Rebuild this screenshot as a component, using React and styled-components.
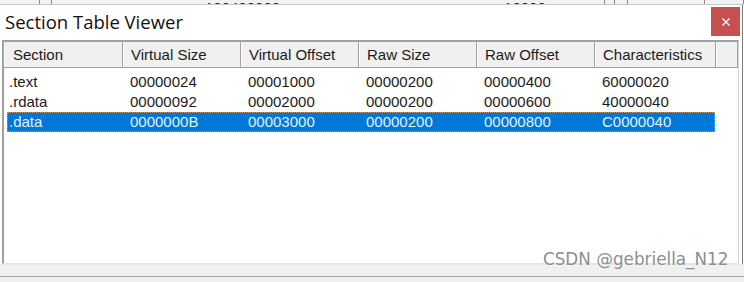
import React from "react";
import styled, { createGlobalStyle } from "styled-components";

const Global = createGlobalStyle`
  html, body { margin: 0; padding: 0; background: #ffffff; overflow: hidden; }
  #root { width: 744px; height: 282px; }
`;

const Page = styled.div`
  position: relative;
  width: 744px;
  height: 282px;
  display: flex;
  flex-direction: column;
  background: #ffffff;
  overflow: hidden;
`;

const Backdrop = styled.div`
  flex: none;
  height: 4px;
  display: flex;
  background: #f2f2f2;
  border-bottom: 1px solid #c9c9c9;
  overflow: hidden;
`;

const BackSeg = styled.div`
  flex: none;
  width: ${(p) => p.$w}px;
  border-right: 1px solid #8a8a8a;
  box-sizing: border-box;
  overflow: hidden;
  font-family: "Liberation Sans", Arial, sans-serif;
  font-size: 15px;
  line-height: 15px;
  color: #222;
  white-space: nowrap;
`;

const BackText = styled.span`
  display: inline-block;
  margin-top: -13px;
  margin-left: ${(p) => p.$x}px;
`;

const Window = styled.div`
  flex: 1;
  display: flex;
  flex-direction: column;
  border-right: 1px solid #7a7a7a;
  margin-right: 1px;
  background: #ffffff;
  min-height: 0;
`;

const TitleBar = styled.div`
  flex: none;
  height: 35px;
  display: flex;
  align-items: flex-start;
  justify-content: space-between;
  padding: 0 2px 0 5px;
`;

const Title = styled.div`
  margin-top: 5px;
  font-family: "Open Sans", "Noto Sans", sans-serif;
  font-size: 18.5px;
  line-height: 24px;
  color: #111;
`;

const CloseButton = styled.div`
  margin-top: 2px;
  width: 29px;
  height: 29px;
  background: #c75050;
  display: flex;
  align-items: center;
  justify-content: center;
`;

const ListView = styled.div`
  flex: 1;
  margin: 0 3px 0 2px;
  border-top: 2px solid #a0a0a0;
  border-left: 2px solid #a0a0a0;
  border-right: 1px solid #d6d6d6;
  border-bottom: 1px solid #e3e3e3;
  background: #ffffff;
  display: flex;
  flex-direction: column;
  min-height: 0;
`;

const Header = styled.div`
  flex: none;
  height: 26px;
  display: grid;
  grid-template-columns: 119px 118px 118px 118px 118px 121px 1fr;
  background: #f0f0f0;
  border-bottom: 1px solid #a0a0a0;
  box-sizing: border-box;
`;

const HeadCell = styled.div`
  box-sizing: border-box;
  border-left: 1px solid #ffffff;
  border-right: 1px solid #a0a0a0;
  padding-left: ${(p) => (p.$first ? 8 : 7)}px;
  display: flex;
  align-items: center;
  font-family: "Liberation Sans", Arial, sans-serif;
  font-size: 15px;
  color: #1b1b1b;
  white-space: nowrap;
`;

const Rows = styled.div`
  padding-top: 4px;
  margin-left: 3px;
  width: 708px;
  display: flex;
  flex-direction: column;
`;

const Row = styled.div`
  height: 20px;
  box-sizing: border-box;
  display: grid;
  grid-template-columns: 117px 118px 118px 118px 118px 119px;
  align-items: center;
  background: ${(p) => (p.$selected ? "#0078d7" : "transparent")};
  color: ${(p) => (p.$selected ? "#e6f2fd" : "#1b1b1b")};
  border: 1px dotted ${(p) => (p.$selected ? "#c99a70" : "transparent")};
`;

const Cell = styled.div`
  padding-left: ${(p) => (p.$first ? 1 : 5)}px;
  font-family: "Liberation Sans", Arial, sans-serif;
  font-size: 15px;
  line-height: 18px;
  white-space: nowrap;
`;

const Footer = styled.div`
  flex: none;
  height: 18px;
  display: flex;
  flex-direction: column;
  background: #f0f0f0;
  border-top: 1px solid #e6e6e6;
  box-sizing: border-box;
`;

const FooterLine = styled.div`
  margin-top: 11px;
  height: 1px;
  background: #a0a0a0;
`;

const Watermark = styled.div`
  position: absolute;
  left: 543px;
  top: 249px;
  font-family: "DejaVu Sans", Verdana, sans-serif;
  font-size: 16.8px;
  line-height: 20px;
  color: #8e8e8e;
  text-shadow: 0 0 2px #ffffff;
  white-space: nowrap;
`;

const columns = [
  "Section",
  "Virtual Size",
  "Virtual Offset",
  "Raw Size",
  "Raw Offset",
  "Characteristics",
];

const data = [
  [".text", "00000024", "00001000", "00000200", "00000400", "60000020"],
  [".rdata", "00000092", "00002000", "00000200", "00000600", "40000040"],
  [".data", "0000000B", "00003000", "00000200", "00000800", "C0000040"],
];

export default function App() {
  return (
    <>
      <Global />
      <Page>
        <Backdrop>
          <BackSeg $w={40} />
          <BackSeg $w={12} />
          <BackSeg $w={553}>
            <BackText $x={153}>100400000</BackText>
            <BackText $x={224}>10000</BackText>
          </BackSeg>
          <BackSeg $w={10} />
          <BackSeg $w={13} />
          <BackSeg $w={77} />
          <BackSeg $w={39} />
        </Backdrop>
        <Window>
          <TitleBar>
            <Title>Section Table Viewer</Title>
            <CloseButton>
              <svg width="8" height="8" viewBox="0 0 8 8">
                <path d="M0.5 0.5 L7.5 7.5 M7.5 0.5 L0.5 7.5" stroke="#ffffff" strokeWidth="1.3" />
              </svg>
            </CloseButton>
          </TitleBar>
          <ListView>
            <Header>
              {columns.map((c, i) => (
                <HeadCell key={c} $first={i === 0}>
                  {c}
                </HeadCell>
              ))}
              <HeadCell />
            </Header>
            <Rows>
              {data.map((r, i) => (
                <Row key={r[0]} $selected={i === 2}>
                  {r.map((v, j) => (
                    <Cell key={j} $first={j === 0}>
                      {v}
                    </Cell>
                  ))}
                </Row>
              ))}
            </Rows>
          </ListView>
        </Window>
        <Footer>
          <FooterLine />
        </Footer>
        <Watermark>CSDN @gebriella_N12</Watermark>
      </Page>
    </>
  );
}
